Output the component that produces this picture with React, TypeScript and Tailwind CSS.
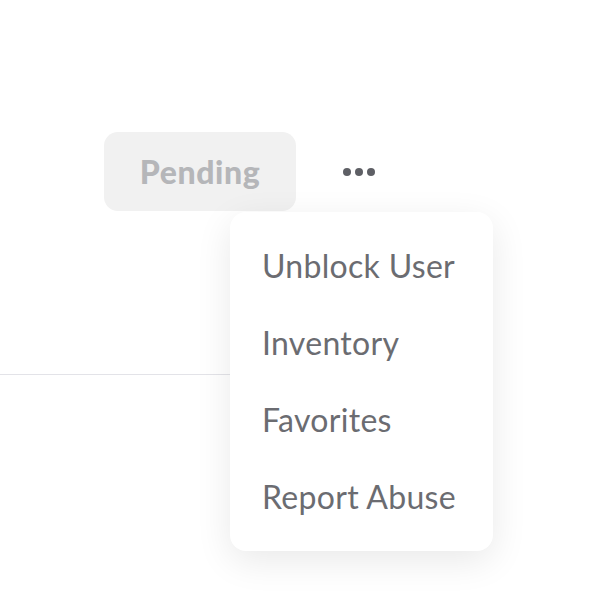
import React from "react";

const items = ["Unblock User", "Inventory", "Favorites", "Report Abuse"];

const App: React.FC = () => {
  return (
    <div
      className="w-[595px] h-[604px] bg-white overflow-hidden"
      style={{ fontFamily: "Lato, 'Noto Sans', sans-serif" }}
    >
      <div className="pt-[132px]">
        {/* Row: status + more */}
        <div className="flex items-center pl-[104px]">
          <button className="w-[192px] h-[79px] rounded-[14px] bg-[#f1f1f1] text-[#b5b6b9] text-[32px] font-black tracking-[0.6px]">
            Pending
          </button>

          <div className="relative ml-[47px]">
            <button className="flex items-center gap-[4px] h-[79px]">
              <span className="w-[8px] h-[8px] rounded-full bg-[#5e5f65]" />
              <span className="w-[8px] h-[8px] rounded-full bg-[#5e5f65]" />
              <span className="w-[8px] h-[8px] rounded-full bg-[#5e5f65]" />
            </button>

            {/* Dropdown menu */}
            <div className="absolute z-10 left-[-113px] top-[80px] w-[263px] h-[339px] rounded-[16px] bg-white shadow-[0_10px_36px_rgba(0,0,0,0.09)] pt-[15px] pl-[32px]">
              {items.map((item) => (
                <div
                  key={item}
                  className="h-[77px] flex items-center text-[32px] text-[#6b6c71] tracking-[0.3px] whitespace-nowrap"
                >
                  {item}
                </div>
              ))}
            </div>
          </div>
        </div>

        {/* Divider */}
        <div className="mt-[163px] w-[360px] border-b border-[#e3e3e8]" />
      </div>
    </div>
  );
};

export default App;
